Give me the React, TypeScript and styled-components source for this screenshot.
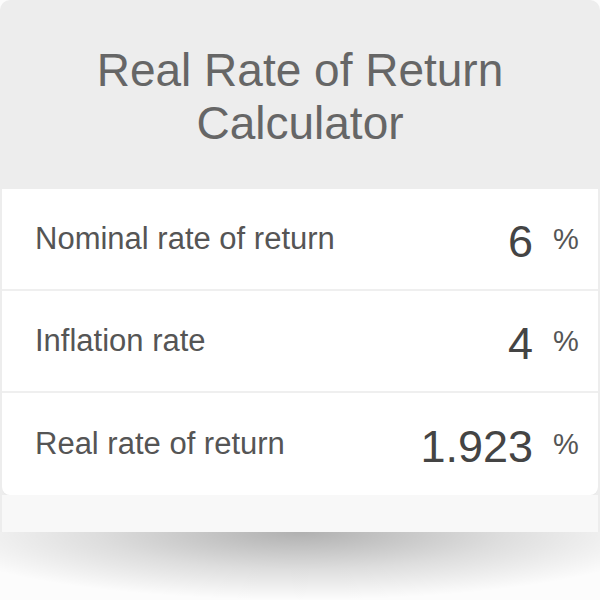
import React from 'react';
import styled, { createGlobalStyle } from 'styled-components';

type RowType = {
    label: string;
    value: string;
    unit: string;
};

const rows: RowType[] = [
    { label: 'Nominal rate of return', value: '6', unit: '%' },
    { label: 'Inflation rate', value: '4', unit: '%' },
    { label: 'Real rate of return', value: '1.923', unit: '%' },
];

const GlobalStyle = createGlobalStyle`
    body {
        margin: 0;
        background: #fcfcfc;
        font-family: "Liberation Sans", Arial, sans-serif;
    }
`;

const Page = styled.div`
    width: 600px;
    height: 600px;
    display: flex;
    flex-direction: column;
`;
const Card = styled.div`
    display: flex;
    flex-direction: column;
    background-color: #ededed;
    border-radius: 10px 10px 0 0;
    padding: 0 2px;
`;
const Header = styled.h1`
    margin: 0;
    height: 189px;
    box-sizing: border-box;
    padding-top: 4px;
    display: flex;
    align-items: center;
    justify-content: center;
    text-align: center;
    font-size: 46px;
    line-height: 53px;
    font-weight: normal;
    color: #666;
`;
const Panel = styled.div`
    background-color: #fff;
    border-radius: 0 0 8px 8px;
    box-shadow: 0 1px 0 #e8e8e8;
`;
const Row = styled.div<{ $last?: boolean }>`
    display: flex;
    align-items: center;
    height: ${(p) => (p.$last ? 102 : 100)}px;
    padding: 0 16px 0 33px;
    border-bottom: ${(p) => (p.$last ? 'none' : '2px solid #efefef')};
`;
const Label = styled.div`
    flex-grow: 1;
    font-size: 31px;
    color: #555;
`;
const Amount = styled.div`
    display: flex;
    align-items: flex-start;
    gap: 20px;
    padding-top: 5px;
`;
const Value = styled.div`
    font-size: 45px;
    color: #444;
`;
const Unit = styled.div`
    width: 29px;
    padding-top: 7px;
    font-size: 29px;
    color: #555;
`;
const Footer = styled.div`
    height: 37px;
    background-color: #f8f8f8;
`;
const Shadow = styled.div`
    flex-grow: 1;
    background: radial-gradient(
        ellipse 62% 100% at 50% 0%,
        rgba(0, 0, 0, 0.3) 0%,
        rgba(0, 0, 0, 0.12) 55%,
        rgba(0, 0, 0, 0) 100%
    );
`;

const App = (): JSX.Element => {
    return (
        <Page>
            <GlobalStyle />
            <Card>
                <Header>
                    Real Rate of Return
                    <br />
                    Calculator
                </Header>
                <Panel>
                    {rows.map((row, i) => (
                        <Row key={row.label} $last={i === rows.length - 1}>
                            <Label>{row.label}</Label>
                            <Amount>
                                <Value>{row.value}</Value>
                                <Unit>{row.unit}</Unit>
                            </Amount>
                        </Row>
                    ))}
                </Panel>
                <Footer />
            </Card>
            <Shadow />
        </Page>
    );
};

export default App;
